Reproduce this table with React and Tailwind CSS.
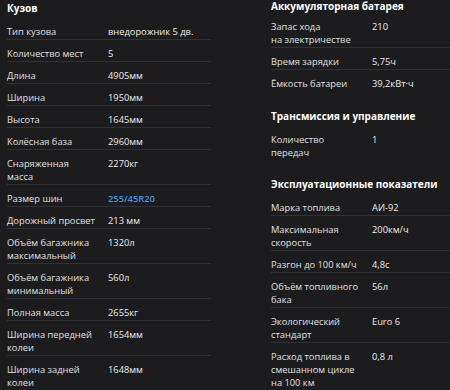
import React from 'react';

const body = [
  ['Тип кузова', 'внедорожник 5 дв.'],
  ['Количество мест', '5'],
  ['Длина', '4905мм'],
  ['Ширина', '1950мм'],
  ['Высота', '1645мм'],
  ['Колёсная база', '2960мм'],
  ['Снаряженная масса', '2270кг'],
  ['Размер шин', '255/45R20', true],
  ['Дорожный просвет', '213 мм'],
  ['Объём багажника максимальный', '1320л'],
  ['Объём багажника минимальный', '560л'],
  ['Полная масса', '2655кг'],
  ['Ширина передней колеи', '1654мм'],
  ['Ширина задней колеи', '1648мм'],
];

const battery = [
  ['Запас хода на\u00a0электричестве', '210'],
  ['Время зарядки', '5,75ч'],
  ['Ёмкость батареи', '39,2кВт·ч'],
];

const transmission = [['Количество передач', '1']];

const usage = [
  ['Марка топлива', 'АИ-92'],
  ['Максимальная скорость', '200км/ч'],
  ['Разгон до 100 км/ч', '4,8с'],
  ['Объём топливного бака', '56л'],
  ['Экологический стандарт', 'Euro 6'],
  ['Расход топлива в смешанном цикле на\u00a0100\u00a0км', '0,8 л'],
];

// one spec line: label on the left, value on the right
const Row = ({ label, value, link, last }) => (
  <div className={`flex pt-[7px] pb-[1px] leading-[13px] ${last ? '' : 'border-b border-[#323235]'}`}>
    <div className="w-[101px] shrink-0 pr-[13px] text-[#e0e0e0]">{label}</div>
    <div className={link ? 'font-semibold text-[#5b8fd6]' : 'text-[#ededed]'}>{value}</div>
  </div>
);

const Section = ({ title, rows, headClass }) => (
  <div>
    <h3 className={`text-[10px] font-bold text-white ${headClass}`}>{title}</h3>
    {rows.map(([label, value, link], i) => (
      <Row key={label} label={label} value={value} link={link} last={i === rows.length - 1} />
    ))}
  </div>
);

export default function App() {
  return (
    <div
      className="w-[450px] h-[390px] overflow-hidden bg-[#1c1c1e] text-[9.3px]"
      style={{ fontFamily: '"Open Sans", "Noto Sans", sans-serif' }}
    >
      <div className="flex pl-[7px] gap-[60px]">
        <div className="w-[204px] shrink-0">
          <Section title="Кузов" rows={body} headClass="leading-[14px] pt-[1px] pb-[3px]" />
        </div>
        <div className="w-[204px] shrink-0">
          <Section title="Аккумуляторная батарея" rows={battery} headClass="leading-[12px] pb-[1px]" />
          <Section title="Трансмиссия и управление" rows={transmission} headClass="leading-[14px] mt-[18px] pb-[3px]" />
          <Section title="Эксплуатационные показатели" rows={usage} headClass="leading-[14px] mt-[17px] pb-[3px]" />
        </div>
      </div>
    </div>
  );
}
